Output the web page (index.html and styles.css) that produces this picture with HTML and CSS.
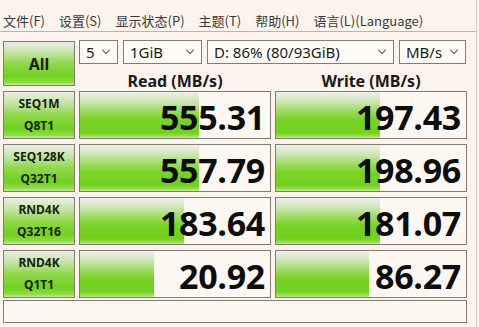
FILE: index.html
```html
<!DOCTYPE html>
<html lang="zh-CN">
<head>
<meta charset="utf-8">
<title>CrystalDiskMark</title>
<link rel="stylesheet" href="styles.css">
</head>
<body>
<div class="window">
  <div class="titlestrip"></div>
  <nav class="menubar">
    <span class="menu">文件(F)</span>
    <span class="menu">设置(S)</span>
    <span class="menu">显示状态(P)</span>
    <span class="menu">主题(T)</span>
    <span class="menu">帮助(H)</span>
    <span class="menu">语言(L)(Language)</span>
  </nav>
  <main class="grid">
    <div class="btn all">All</div>
    <div class="controls">
      <div class="selects">
        <div class="select s-count"><span>5</span><i class="chev"></i></div>
        <div class="select s-size"><span>1GiB</span><i class="chev"></i></div>
        <div class="select s-drive"><span>D: 86% (80/93GiB)</span><i class="chev"></i></div>
        <div class="select s-unit"><span>MB/s</span><i class="chev"></i></div>
      </div>
      <div class="heads">
        <div class="head">Read (MB/s)</div>
        <div class="head">Write (MB/s)</div>
      </div>
    </div>

    <div class="btn label"><span>SEQ1M</span><span>Q8T1</span></div>
    <div class="cell"><div class="fill" style="width:119px"></div><span class="val">555.31</span></div>
    <div class="cell"><div class="fill" style="width:104px"></div><span class="val">197.43</span></div>

    <div class="btn label"><span>SEQ128K</span><span>Q32T1</span></div>
    <div class="cell"><div class="fill" style="width:119px"></div><span class="val">557.79</span></div>
    <div class="cell"><div class="fill" style="width:104px"></div><span class="val">198.96</span></div>

    <div class="btn label"><span>RND4K</span><span>Q32T16</span></div>
    <div class="cell"><div class="fill" style="width:104px"></div><span class="val">183.64</span></div>
    <div class="cell"><div class="fill" style="width:104px"></div><span class="val">181.07</span></div>

    <div class="btn label"><span>RND4K</span><span>Q1T1</span></div>
    <div class="cell"><div class="fill" style="width:74px"></div><span class="val">20.92</span></div>
    <div class="cell"><div class="fill" style="width:93px"></div><span class="val">86.27</span></div>

    <div class="comment"></div>
  </main>
</div>
</body>
</html>
```

FILE: styles.css
```css
html, body {
  margin: 0;
  padding: 0;
  background: #fcf3ec;
}
body {
  width: 479px;
  height: 327px;
  overflow: hidden;
  font-family: "Noto Sans", "Open Sans", "Noto Sans CJK SC", sans-serif;
  color: #1a1a1a;
}
.window {
  width: 477px;
  height: 327px;
  border-right: 1px solid #d9d0c9;
  box-sizing: border-box;
}
.titlestrip {
  height: 10px;
}
.menubar {
  height: 21px;
  display: flex;
  align-items: center;
  gap: 14px;
  padding-left: 3px;
  border-bottom: 1px solid #bdb4ad;
  font-family: "Noto Sans CJK SC", sans-serif;
  font-size: 13px;
  color: #3a3a3a;
}
.menu {
  white-space: nowrap;
}
.grid {
  display: grid;
  grid-template-columns: 72px 192px 192px;
  column-gap: 4px;
  row-gap: 5px;
  padding: 8px 0 0 3px;
}
.btn {
  box-sizing: border-box;
  border: 1px solid #857b74;
  background: linear-gradient(to bottom, #e9efe3 0%, #c4e3a6 25%, #8fd84a 50%, #72d020 80%, #8edc48 94%, #c8ee9e 100%);
  display: flex;
  flex-direction: column;
  align-items: center;
  justify-content: center;
  font-weight: 700;
  color: #16240c;
}
.all {
  margin-top: 1px;
  height: 45px;
  font-size: 16px;
}
.label {
  height: 48px;
  font-size: 12px;
  line-height: 22px;
}
.controls {
  grid-column: 2 / 4;
  display: flex;
  flex-direction: column;
}
.selects {
  display: flex;
  gap: 5px;
  height: 24px;
}
.select {
  box-sizing: border-box;
  height: 24px;
  border: 1px solid #857b74;
  background: #fffaf6;
  display: flex;
  align-items: center;
  justify-content: space-between;
  padding: 0 6px 0 6px;
  font-size: 15px;
  color: #1a1a1a;
  white-space: nowrap;
}
.s-count { width: 39px; }
.s-size { width: 79px; }
.s-drive { width: 187px; }
.s-unit { width: 67px; }
.chev {
  width: 5px;
  height: 5px;
  border-right: 1px solid #555;
  border-bottom: 1px solid #555;
  transform: rotate(45deg);
  margin-top: -4px;
  margin-right: 2px;
}
.heads {
  display: grid;
  grid-template-columns: 192px 192px;
  column-gap: 4px;
  height: 22px;
  align-items: center;
}
.head {
  text-align: center;
  font-weight: 700;
  font-size: 16px;
  padding-top: 6px;
}
.cell {
  position: relative;
  box-sizing: border-box;
  height: 48px;
  border: 1px solid #857b74;
  background: #fdf7f2;
  display: flex;
  align-items: center;
  justify-content: flex-end;
  padding-right: 5px;
  overflow: hidden;
}
.fill {
  position: absolute;
  left: 0;
  top: 0;
  bottom: 0;
  background: linear-gradient(to bottom, #eef0ea 0%, #cfe6b8 20%, #97d955 45%, #78d227 60%, #72d01e 88%, #96de55 96%, #c5ee98 100%);
}
.val {
  position: relative;
  font-family: "Open Sans", "Noto Sans", sans-serif;
  font-weight: 700;
  font-size: 34px;
  line-height: 1;
  letter-spacing: -0.3px;
  color: #0d0d0d;
  padding-top: 3px;
}
.comment {
  grid-column: 1 / 4;
  box-sizing: border-box;
  height: 23px;
  margin-top: -3px;
  border: 1px solid #857b74;
  background: #fdf7f2;
}
```
